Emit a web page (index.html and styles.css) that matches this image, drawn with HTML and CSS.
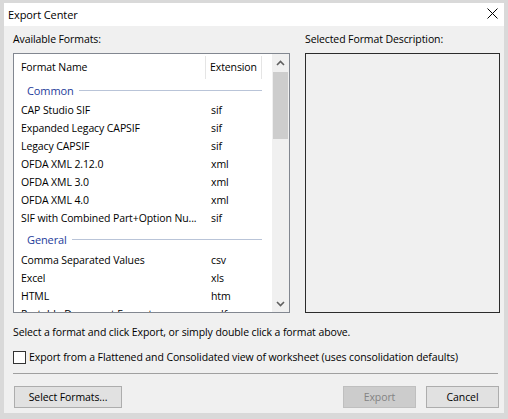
FILE: index.html
```html
<!DOCTYPE html>
<html>
<head>
<meta charset="utf-8">
<link rel="stylesheet" href="styles.css">
</head>
<body>
<div class="window">
  <div class="titlebar">
    <span class="title">Export Center</span>
    <svg class="close" width="11" height="11" viewBox="0 0 11 11"><path d="M0.5 0.5 L10.5 10.5 M10.5 0.5 L0.5 10.5" stroke="#000" stroke-width="1" fill="none"/></svg>
  </div>
  <div class="content">
    <div class="main">
      <div class="col-left">
        <div class="label">Available Formats:</div>
        <div class="listbox">
          <div class="rows">
            <div class="header">
              <div class="h-name">Format Name</div>
              <div class="h-ext">Extension</div>
            </div>
            <div class="group first"><span class="g-text">Common</span><span class="g-line"></span></div>
            <div class="row"><span class="c-name">CAP Studio SIF</span><span class="c-ext">sif</span></div>
            <div class="row"><span class="c-name">Expanded Legacy CAPSIF</span><span class="c-ext">sif</span></div>
            <div class="row"><span class="c-name">Legacy CAPSIF</span><span class="c-ext">sif</span></div>
            <div class="row"><span class="c-name">OFDA XML 2.12.0</span><span class="c-ext">xml</span></div>
            <div class="row"><span class="c-name">OFDA XML 3.0</span><span class="c-ext">xml</span></div>
            <div class="row"><span class="c-name">OFDA XML 4.0</span><span class="c-ext">xml</span></div>
            <div class="row"><span class="c-name">SIF with Combined Part+Option Nu...</span><span class="c-ext">sif</span></div>
            <div class="group"><span class="g-text">General</span><span class="g-line"></span></div>
            <div class="row"><span class="c-name">Comma Separated Values</span><span class="c-ext">csv</span></div>
            <div class="row"><span class="c-name">Excel</span><span class="c-ext">xls</span></div>
            <div class="row"><span class="c-name">HTML</span><span class="c-ext">htm</span></div>
            <div class="row"><span class="c-name">Portable Document Format</span><span class="c-ext">pdf</span></div>
          </div>
          <div class="scrollbar">
            <div class="arrow">
              <svg width="9" height="6" viewBox="0 0 9 6"><path d="M1 5 L4.5 1.5 L8 5" stroke="#606060" stroke-width="1.6" fill="none"/></svg>
            </div>
            <div class="track"><div class="thumb"></div></div>
            <div class="arrow">
              <svg width="9" height="6" viewBox="0 0 9 6"><path d="M1 1 L4.5 4.5 L8 1" stroke="#606060" stroke-width="1.6" fill="none"/></svg>
            </div>
          </div>
        </div>
      </div>
      <div class="col-right">
        <div class="label">Selected Format Description:</div>
        <div class="descbox"></div>
      </div>
    </div>
    <div class="hint">Select a format and click Export, or simply double click a format above.</div>
    <label class="check"><span class="box"></span><span>Export from a Flattened and Consolidated view of worksheet (uses consolidation defaults)</span></label>
    <div class="sep"></div>
    <div class="buttons">
      <button class="btn wide">Select Formats...</button>
      <span class="spacer"></span>
      <button class="btn disabled">Export</button>
      <button class="btn">Cancel</button>
    </div>
  </div>
</div>
</body>
</html>
```
FILE: styles.css
```css
* { box-sizing: border-box; }
html, body { margin: 0; padding: 0; }
body {
  background: #d9d9d9;
  width: 508px;
  height: 419px;
  overflow: hidden;
  font-family: "Open Sans", "Noto Sans", sans-serif;
  font-size: 10.5px;
  letter-spacing: -0.1px;
  color: #000;
}
.window {
  margin: 3px 4px 0 4px;
  height: 410px;
  background: #f0f0f0;
  display: flex;
  flex-direction: column;
}
.titlebar {
  height: 23px;
  background: #fff;
  display: flex;
  align-items: center;
  padding: 0 6px 0 4px;
  font-size: 11px;
}
.title { flex: 1; }
.close { display: block; margin-top: -2px; }
.content {
  padding: 0 4px 0 9px;
  display: flex;
  flex-direction: column;
}
.main {
  display: flex;
  gap: 15px;
}
.col-left { width: 277px; }
.col-right { width: 195px; }
.label {
  height: 27px;
  padding-top: 6px;
  line-height: 15px;
}
.listbox {
  height: 260px;
  border: 1px solid #828790;
  background: #fff;
  display: flex;
  overflow: hidden;
}
.rows { flex: 1; overflow: hidden; }
.header {
  height: 24px;
  display: flex;
  align-items: center;
  padding-top: 3px;
}
.h-name {
  width: 192px;
  padding-left: 7px;
  border-right: 1px solid #e5e5e5;
  height: 23px;
  line-height: 23px;
}
.h-ext {
  width: 56px;
  padding-left: 4px;
  border-right: 1px solid #e5e5e5;
  height: 23px;
  line-height: 23px;
}
.group {
  height: 24px;
  display: flex;
  align-items: center;
  padding-left: 13px;
  width: 248px;
  color: #1e3c9a;
  font-size: 11px;
  padding-top: 1px;
}
.group.first { height: 23px; }
.g-line {
  flex: 1;
  height: 1px;
  background: #b9c4d8;
  margin-left: 5px;
}
.row {
  height: 18px;
  line-height: 18px;
  display: flex;
  white-space: nowrap;
}
.c-name { width: 192px; padding-left: 7px; overflow: hidden; }
.c-ext { padding-left: 5px; }
.scrollbar {
  width: 17px;
  background: #f0f0f0;
  display: flex;
  flex-direction: column;
}
.arrow {
  height: 17px;
  display: flex;
  align-items: center;
  justify-content: center;
}
.arrow svg { display: block; }
.track { flex: 1; padding: 1px 1px 0 1px; }
.thumb {
  height: 67px;
  background: #cdcdcd;
}
.descbox {
  height: 260px;
  border: 1px solid #2b2b2b;
  background: #f0f0f0;
}
.hint {
  margin-top: 11px;
  line-height: 16px;
}
.check {
  margin-top: 9px;
  display: flex;
  align-items: center;
  gap: 3px;
  line-height: 16px;
}
.box {
  width: 13px;
  height: 13px;
  border: 1px solid #333;
  background: #fff;
  display: block;
}
.sep {
  margin-top: 8px;
  height: 1px;
  background: #a0a0a0;
  margin-right: 2px;
}
.buttons {
  margin-top: 12px;
  display: flex;
  gap: 10px;
  padding-right: 1px;
}
.spacer { flex: 1; }
.btn {
  font-family: inherit;
  font-size: 10.5px;
  letter-spacing: -0.1px;
  height: 22px;
  width: 73px;
  background: #e1e1e1;
  border: 1px solid #adadad;
  color: #000;
  padding: 0;
  margin: 0;
}
.btn.wide { width: 108px; margin-left: 1px; }
.btn.disabled {
  background: #cccccc;
  border-color: #bfbfbf;
  color: #838383;
}
```
